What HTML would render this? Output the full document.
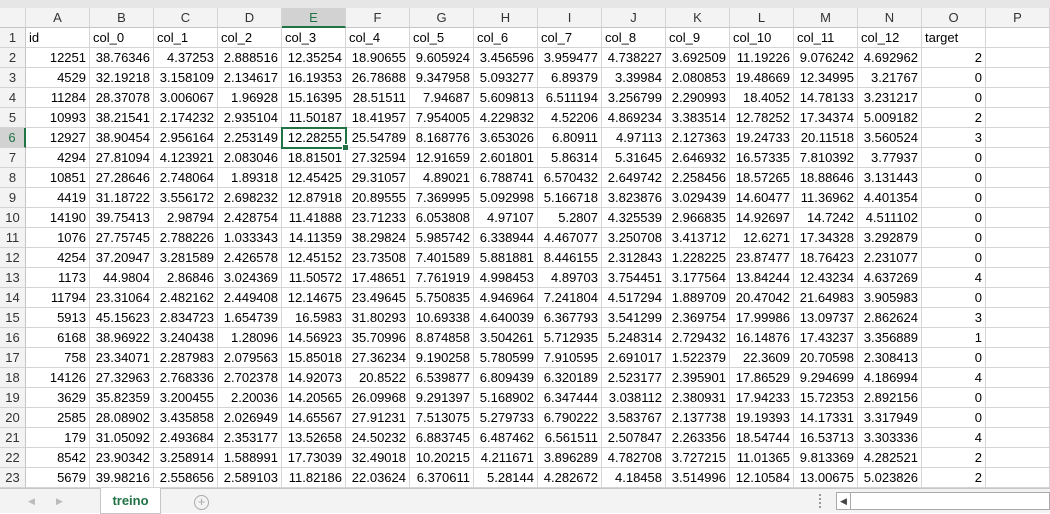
<!DOCTYPE html>
<html><head><meta charset="utf-8">
<style>
*{margin:0;padding:0;box-sizing:border-box}
body{width:1050px;height:513px;overflow:hidden;background:#fff;font-family:"Liberation Sans",sans-serif;font-size:13px;color:#000;position:relative}
#top{position:absolute;left:0;top:0;width:1050px;height:8px;background:#e6e6e6}
#g{position:absolute;left:0;top:8px}
.r{display:flex;height:20px}
.r span{width:64px;height:20px;border-right:1px solid #d4d4d4;border-bottom:1px solid #d4d4d4;text-align:right;padding-right:3px;line-height:20px;white-space:nowrap;overflow:hidden}
.r span:first-child{width:26px;background:#f3f3f3;color:#333;text-align:center;padding:0;border-right:1px solid #c6c6c6;border-bottom:1px solid #d4d4d4}
.h span{background:#f3f3f3;text-align:center!important;padding:0!important;color:#333;border-bottom:1px solid #c6c6c6!important;border-right:1px solid #d4d4d4!important;line-height:19px!important}
.h span.sel{background:#d2d2d2;color:#217346;border-bottom:2px solid #217346!important}
.l span{text-align:left;padding-left:3px;padding-right:0}
.r span.rs{background:#d2d2d2!important;color:#217346!important;border-right:2px solid #217346!important}
#sel{position:absolute;left:281px;top:127px;width:66px;height:22px;border:2px solid #217346}
#sel:after{content:"";position:absolute;right:-4px;bottom:-4px;width:5px;height:5px;background:#217346;border:1px solid #fff}
#bot{position:absolute;left:0;top:488px;width:1050px;height:25px;background:#f3f3f3;border-top:1px solid #c6c6c6}
#tab{position:absolute;left:100px;top:-1px;width:61px;height:26px;background:#fff;border:1px solid #c6c6c6;border-top:none;color:#217346;font-weight:bold;text-align:center;line-height:25px;font-size:13px}
#plus{position:absolute;left:194px;top:6px;width:15px;height:15px;border:1px solid #aaa;border-radius:50%;color:#aaa;font-size:13px;line-height:12px;text-align:center}
.ar{position:absolute;top:7px;color:#bbb;font-size:9px}
#dots{position:absolute;left:819px;top:5px;width:2px;height:14px;border-left:2px dotted #999}
#sb{position:absolute;left:836px;top:3px;width:214px;height:18px;background:#fff;border:1px solid #aaa}
#sb i{position:absolute;left:0;top:0;width:14px;height:16px;border-right:1px solid #aaa;font-style:normal;font-size:9px;color:#444;text-align:center;line-height:16px}
</style></head><body>
<div id="top"></div>
<div id="g">
<div class="r h"><span></span><span>A</span><span>B</span><span>C</span><span>D</span><span class="sel">E</span><span>F</span><span>G</span><span>H</span><span>I</span><span>J</span><span>K</span><span>L</span><span>M</span><span>N</span><span>O</span><span>P</span></div>
<div class="r l"><span>1</span><span>id</span><span>col_0</span><span>col_1</span><span>col_2</span><span>col_3</span><span>col_4</span><span>col_5</span><span>col_6</span><span>col_7</span><span>col_8</span><span>col_9</span><span>col_10</span><span>col_11</span><span>col_12</span><span>target</span><span></span></div>
<div class="r"><span>2</span><span>12251</span><span>38.76346</span><span>4.37253</span><span>2.888516</span><span>12.35254</span><span>18.90655</span><span>9.605924</span><span>3.456596</span><span>3.959477</span><span>4.738227</span><span>3.692509</span><span>11.19226</span><span>9.076242</span><span>4.692962</span><span>2</span><span></span></div>
<div class="r"><span>3</span><span>4529</span><span>32.19218</span><span>3.158109</span><span>2.134617</span><span>16.19353</span><span>26.78688</span><span>9.347958</span><span>5.093277</span><span>6.89379</span><span>3.39984</span><span>2.080853</span><span>19.48669</span><span>12.34995</span><span>3.21767</span><span>0</span><span></span></div>
<div class="r"><span>4</span><span>11284</span><span>28.37078</span><span>3.006067</span><span>1.96928</span><span>15.16395</span><span>28.51511</span><span>7.94687</span><span>5.609813</span><span>6.511194</span><span>3.256799</span><span>2.290993</span><span>18.4052</span><span>14.78133</span><span>3.231217</span><span>0</span><span></span></div>
<div class="r"><span>5</span><span>10993</span><span>38.21541</span><span>2.174232</span><span>2.935104</span><span>11.50187</span><span>18.41957</span><span>7.954005</span><span>4.229832</span><span>4.52206</span><span>4.869234</span><span>3.383514</span><span>12.78252</span><span>17.34374</span><span>5.009182</span><span>2</span><span></span></div>
<div class="r"><span class="rs">6</span><span>12927</span><span>38.90454</span><span>2.956164</span><span>2.253149</span><span>12.28255</span><span>25.54789</span><span>8.168776</span><span>3.653026</span><span>6.80911</span><span>4.97113</span><span>2.127363</span><span>19.24733</span><span>20.11518</span><span>3.560524</span><span>3</span><span></span></div>
<div class="r"><span>7</span><span>4294</span><span>27.81094</span><span>4.123921</span><span>2.083046</span><span>18.81501</span><span>27.32594</span><span>12.91659</span><span>2.601801</span><span>5.86314</span><span>5.31645</span><span>2.646932</span><span>16.57335</span><span>7.810392</span><span>3.77937</span><span>0</span><span></span></div>
<div class="r"><span>8</span><span>10851</span><span>27.28646</span><span>2.748064</span><span>1.89318</span><span>12.45425</span><span>29.31057</span><span>4.89021</span><span>6.788741</span><span>6.570432</span><span>2.649742</span><span>2.258456</span><span>18.57265</span><span>18.88646</span><span>3.131443</span><span>0</span><span></span></div>
<div class="r"><span>9</span><span>4419</span><span>31.18722</span><span>3.556172</span><span>2.698232</span><span>12.87918</span><span>20.89555</span><span>7.369995</span><span>5.092998</span><span>5.166718</span><span>3.823876</span><span>3.029439</span><span>14.60477</span><span>11.36962</span><span>4.401354</span><span>0</span><span></span></div>
<div class="r"><span>10</span><span>14190</span><span>39.75413</span><span>2.98794</span><span>2.428754</span><span>11.41888</span><span>23.71233</span><span>6.053808</span><span>4.97107</span><span>5.2807</span><span>4.325539</span><span>2.966835</span><span>14.92697</span><span>14.7242</span><span>4.511102</span><span>0</span><span></span></div>
<div class="r"><span>11</span><span>1076</span><span>27.75745</span><span>2.788226</span><span>1.033343</span><span>14.11359</span><span>38.29824</span><span>5.985742</span><span>6.338944</span><span>4.467077</span><span>3.250708</span><span>3.413712</span><span>12.6271</span><span>17.34328</span><span>3.292879</span><span>0</span><span></span></div>
<div class="r"><span>12</span><span>4254</span><span>37.20947</span><span>3.281589</span><span>2.426578</span><span>12.45152</span><span>23.73508</span><span>7.401589</span><span>5.881881</span><span>8.446155</span><span>2.312843</span><span>1.228225</span><span>23.87477</span><span>18.76423</span><span>2.231077</span><span>0</span><span></span></div>
<div class="r"><span>13</span><span>1173</span><span>44.9804</span><span>2.86846</span><span>3.024369</span><span>11.50572</span><span>17.48651</span><span>7.761919</span><span>4.998453</span><span>4.89703</span><span>3.754451</span><span>3.177564</span><span>13.84244</span><span>12.43234</span><span>4.637269</span><span>4</span><span></span></div>
<div class="r"><span>14</span><span>11794</span><span>23.31064</span><span>2.482162</span><span>2.449408</span><span>12.14675</span><span>23.49645</span><span>5.750835</span><span>4.946964</span><span>7.241804</span><span>4.517294</span><span>1.889709</span><span>20.47042</span><span>21.64983</span><span>3.905983</span><span>0</span><span></span></div>
<div class="r"><span>15</span><span>5913</span><span>45.15623</span><span>2.834723</span><span>1.654739</span><span>16.5983</span><span>31.80293</span><span>10.69338</span><span>4.640039</span><span>6.367793</span><span>3.541299</span><span>2.369754</span><span>17.99986</span><span>13.09737</span><span>2.862624</span><span>3</span><span></span></div>
<div class="r"><span>16</span><span>6168</span><span>38.96922</span><span>3.240438</span><span>1.28096</span><span>14.56923</span><span>35.70996</span><span>8.874858</span><span>3.504261</span><span>5.712935</span><span>5.248314</span><span>2.729432</span><span>16.14876</span><span>17.43237</span><span>3.356889</span><span>1</span><span></span></div>
<div class="r"><span>17</span><span>758</span><span>23.34071</span><span>2.287983</span><span>2.079563</span><span>15.85018</span><span>27.36234</span><span>9.190258</span><span>5.780599</span><span>7.910595</span><span>2.691017</span><span>1.522379</span><span>22.3609</span><span>20.70598</span><span>2.308413</span><span>0</span><span></span></div>
<div class="r"><span>18</span><span>14126</span><span>27.32963</span><span>2.768336</span><span>2.702378</span><span>14.92073</span><span>20.8522</span><span>6.539877</span><span>6.809439</span><span>6.320189</span><span>2.523177</span><span>2.395901</span><span>17.86529</span><span>9.294699</span><span>4.186994</span><span>4</span><span></span></div>
<div class="r"><span>19</span><span>3629</span><span>35.82359</span><span>3.200455</span><span>2.20036</span><span>14.20565</span><span>26.09968</span><span>9.291397</span><span>5.168902</span><span>6.347444</span><span>3.038112</span><span>2.380931</span><span>17.94233</span><span>15.72353</span><span>2.892156</span><span>0</span><span></span></div>
<div class="r"><span>20</span><span>2585</span><span>28.08902</span><span>3.435858</span><span>2.026949</span><span>14.65567</span><span>27.91231</span><span>7.513075</span><span>5.279733</span><span>6.790222</span><span>3.583767</span><span>2.137738</span><span>19.19393</span><span>14.17331</span><span>3.317949</span><span>0</span><span></span></div>
<div class="r"><span>21</span><span>179</span><span>31.05092</span><span>2.493684</span><span>2.353177</span><span>13.52658</span><span>24.50232</span><span>6.883745</span><span>6.487462</span><span>6.561511</span><span>2.507847</span><span>2.263356</span><span>18.54744</span><span>16.53713</span><span>3.303336</span><span>4</span><span></span></div>
<div class="r"><span>22</span><span>8542</span><span>23.90342</span><span>3.258914</span><span>1.588991</span><span>17.73039</span><span>32.49018</span><span>10.20215</span><span>4.211671</span><span>3.896289</span><span>4.782708</span><span>3.727215</span><span>11.01365</span><span>9.813369</span><span>4.282521</span><span>2</span><span></span></div>
<div class="r"><span>23</span><span>5679</span><span>39.98216</span><span>2.558656</span><span>2.589103</span><span>11.82186</span><span>22.03624</span><span>6.370611</span><span>5.28144</span><span>4.282672</span><span>4.18458</span><span>3.514996</span><span>12.10584</span><span>13.00675</span><span>5.023826</span><span>2</span><span></span></div>
</div>
<div id="sel"></div>
<div id="bot">
<span class="ar" style="left:28px">&#9664;</span><span class="ar" style="left:56px">&#9654;</span>
<div id="tab">treino</div>
<div id="plus">+</div>
<div id="dots"></div>
<div id="sb"><i>&#9664;</i></div>
</div>
</body></html>
